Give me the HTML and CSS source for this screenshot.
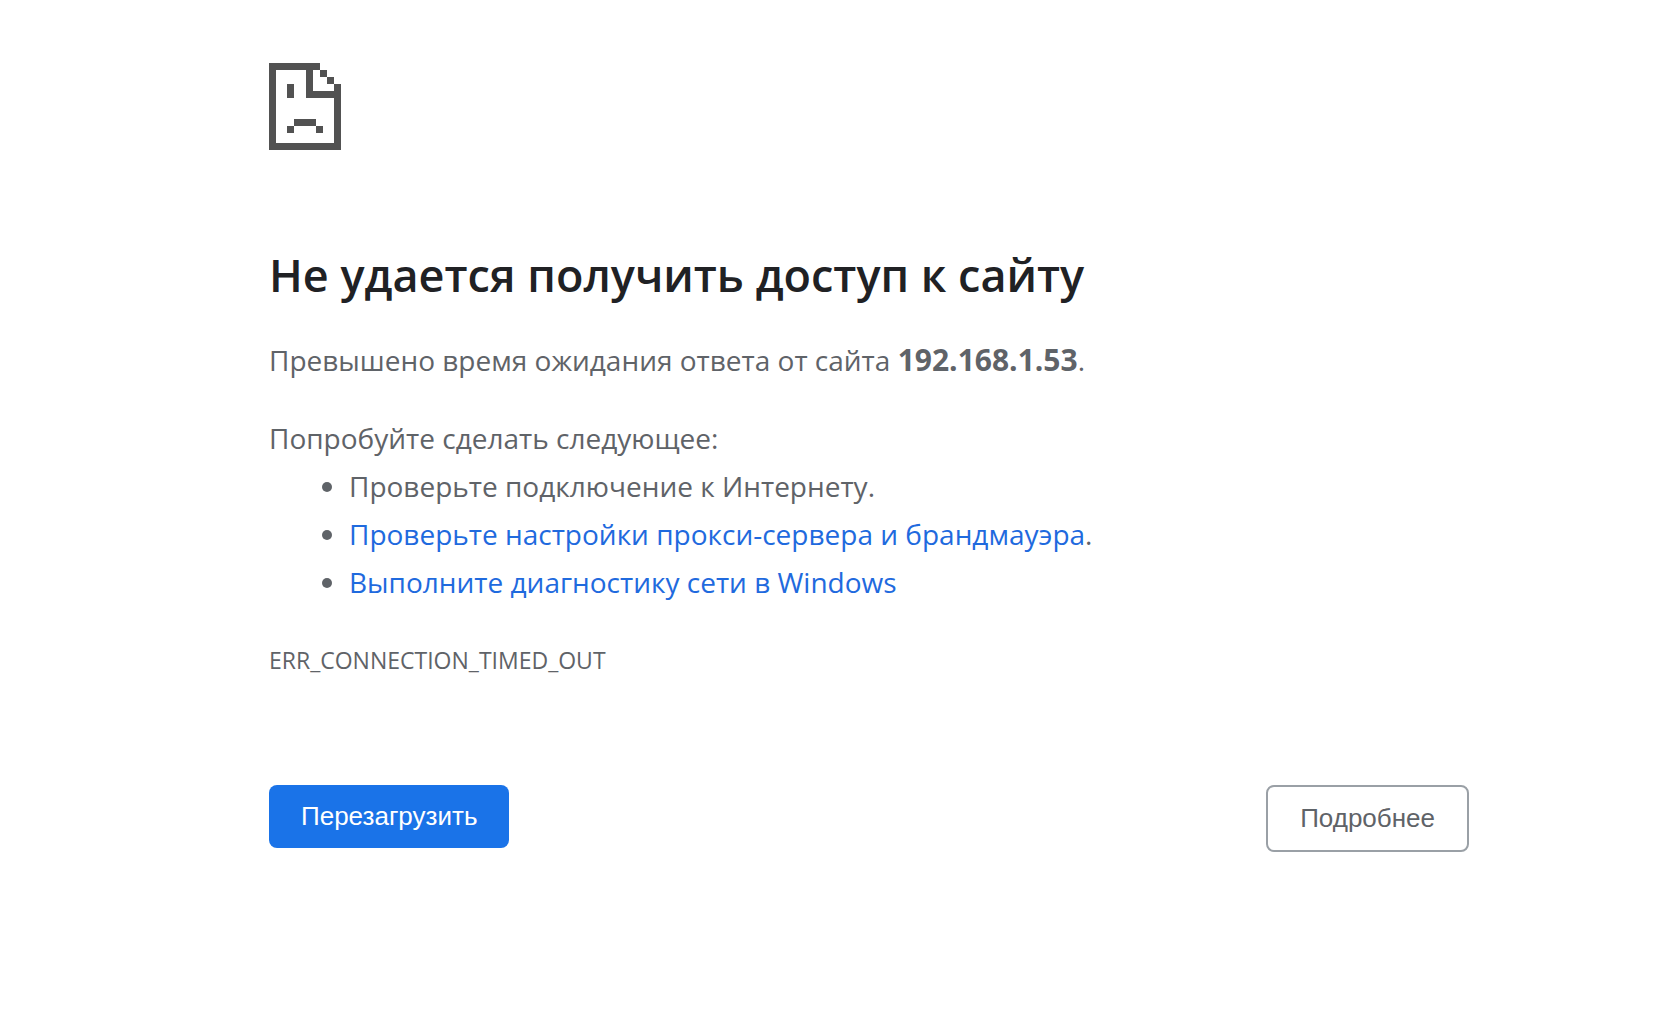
FILE: index.html
```html
<!DOCTYPE html>
<html lang="ru">
<head>
    <meta charset="UTF-8">
    <meta name="viewport" content="width=device-width, initial-scale=1.0">
    <title>192.168.1.53</title>
    <link rel="stylesheet" href="styles.css">
</head>
<body>

    <main class="interstitial">
        <svg class="icon" viewBox="0 0 72 87" shape-rendering="crispEdges" aria-hidden="true">
            <!-- page outline with folded corner -->
            <path d="M0 0H51V7H44V28H65V21H72V87H0ZM7 7V80H65V35H37V7Z" fill-rule="evenodd"/>
            <path d="M51 7H58V14H51ZM58 14H65V21H58Z"/>
            <!-- sad face -->
            <path d="M18 21H25V35H18ZM25 56H47V63H25ZM18 63H25V70H18ZM47 63H54V70H47Z"/>
        </svg>

        <h1>Не удается получить доступ к сайту</h1>
        <p>Превышено время ожидания ответа от сайта <strong>192.168.1.53</strong>.</p>

        <div class="suggestions">
            <p>Попробуйте сделать следующее:</p>
            <ul>
                <li>Проверьте подключение к Интернету.</li>
                <li><a href="#proxy">Проверьте настройки прокси-сервера и брандмауэра</a>.</li>
                <li><a href="#diagnose">Выполните диагностику сети в Windows</a></li>
            </ul>
        </div>

        <div class="error-code">ERR_CONNECTION_TIMED_OUT</div>

        <div class="buttons">
            <button type="button" class="primary-btn">Перезагрузить</button>
            <button type="button" class="secondary-btn">Подробнее</button>
        </div>
    </main>

</body>
</html>
```

FILE: styles.css
```css
:root {
    --primary-color: #1a73e8;
    --link-color: #1f6ade;
    --heading-color: #202124;
    --text-color: #5f6368;
    --border-color: #9aa0a6;
}

* {
    box-sizing: border-box;
}

body {
    margin: 0;
    padding: 63px 0 0 77px;
    background: #fff;
    color: var(--text-color);
    font-family: 'Segoe UI', 'Open Sans', sans-serif;
    font-size: 28px;
    line-height: 48px;
}

.interstitial {
    max-width: 1200px;
    margin: 0 auto;
}

.icon {
    display: block;
    width: 72px;
    height: 87px;
    fill: #525252;
}

h1 {
    margin: 96px 0 32px;
    color: var(--heading-color);
    font-size: 45px;
    font-weight: 600;
    line-height: 58px;
}

p {
    margin: 0;
}

strong {
    font-size: 30px;
}

.suggestions {
    margin-top: 30px;
}

ul {
    margin: 0;
    padding-left: 80px;
}

a {
    color: var(--link-color);
    text-decoration: none;
}

.error-code {
    margin-top: 30px;
    font-size: 23px;
}

.buttons {
    display: flex;
    justify-content: space-between;
    align-items: flex-start;
    margin-top: 101px;
}

button {
    padding: 16px 32px;
    border: none;
    border-radius: 8px;
    font-family: 'Liberation Sans', Arial, sans-serif;
    font-size: 26px;
    line-height: 31px;
    cursor: pointer;
}

.primary-btn {
    background: var(--primary-color);
    color: #fff;
}

.secondary-btn {
    border: 2px solid var(--border-color);
    background: #fff;
    color: var(--text-color);
}
```
